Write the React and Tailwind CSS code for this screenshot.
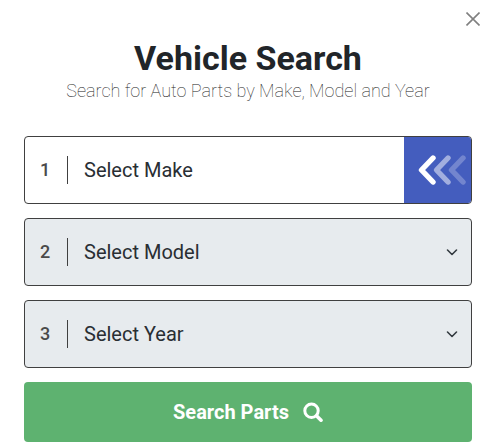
import React from "react";

const fields = [
  { id: "make", step: 1, label: "Select Make", active: true },
  { id: "model", step: 2, label: "Select Model", active: false },
  { id: "year", step: 3, label: "Select Year", active: false },
];

function ActiveMarker() {
  return (
    <span className="flex w-[67px] shrink-0 items-center self-stretch rounded-r-[3px] bg-[#445dbe] pl-3.5">
      <svg
        className="h-8 w-12"
        viewBox="0 0 48 32"
        fill="none"
        stroke="#fff"
        strokeWidth="5.4"
        strokeLinecap="round"
        strokeLinejoin="round"
        aria-hidden="true"
      >
        <path d="M45 4 33.5 16 45 28" opacity="0.25" />
        <path d="M30 4 18.5 16 30 28" opacity="0.5" />
        <path d="M15 4 3.5 16 15 28" />
      </svg>
    </span>
  );
}

function Chevron() {
  return (
    <svg
      className="mr-[13px] h-3 w-3 shrink-0"
      viewBox="0 0 12 12"
      fill="none"
      stroke="#343a40"
      strokeWidth="1.6"
      strokeLinecap="round"
      strokeLinejoin="round"
      aria-hidden="true"
    >
      <path d="M1.5 4 6 8.5 10.5 4" />
    </svg>
  );
}

function Field({ id, step, label, active }) {
  return (
    <div
      className={
        active
          ? "flex h-[68px] items-center rounded border border-[#404040] bg-white"
          : "flex h-[68px] items-center rounded border border-[#404040] bg-[#e7ebee]"
      }
    >
      <label
        htmlFor={id}
        className="flex h-7 w-[43px] shrink-0 items-center border-r border-[#404040] pl-[15px] text-lg font-medium text-[#4a4a4a]"
      >
        {step}
      </label>
      <select
        id={id}
        aria-label={label}
        className="h-full min-w-0 flex-1 appearance-none bg-transparent pl-4 text-xl text-[#292e33] outline-none"
      >
        <option>{label}</option>
      </select>
      {active ? <ActiveMarker /> : <Chevron />}
    </div>
  );
}

export default function App() {
  return (
    <main className="bg-white pb-1.5 pl-6 pr-[21px] pt-3 font-[Roboto,sans-serif] text-[#212529]">
      <div className="-mr-2 flex h-[14px] justify-end">
        <button type="button" aria-label="Close" className="h-[14px] w-[14px]">
          <svg viewBox="0 0 14 14" fill="none" stroke="#808080" strokeWidth="1.6" aria-hidden="true">
            <path d="M0.5 0.5 13.5 13.5M13.5 0.5 0.5 13.5" />
          </svg>
        </button>
      </div>
      <header className="mt-3 text-center">
        <h1 className="text-[34px] font-bold leading-10">Vehicle Search</h1>
        <p className="text-lg font-thin leading-[26px] text-[#222]">
          Search for Auto Parts by Make, Model and Year
        </p>
      </header>
      <form className="mt-8 flex flex-col gap-[14px]" onSubmit={(e) => e.preventDefault()}>
        {fields.map((f) => (
          <Field key={f.id} {...f} />
        ))}
        <button
          type="submit"
          className="flex h-[60px] items-center justify-center gap-3.5 rounded bg-[#5eb270] text-xl font-bold text-white"
        >
          Search Parts
          <svg
            className="h-5 w-5"
            viewBox="0 0 20 20"
            fill="none"
            stroke="currentColor"
            strokeWidth="3"
            strokeLinecap="round"
            aria-hidden="true"
          >
            <circle cx="8.5" cy="8.8" r="6.7" />
            <path d="M13.7 14 18 18.2" strokeWidth="3.6" />
          </svg>
        </button>
      </form>
    </main>
  );
}
